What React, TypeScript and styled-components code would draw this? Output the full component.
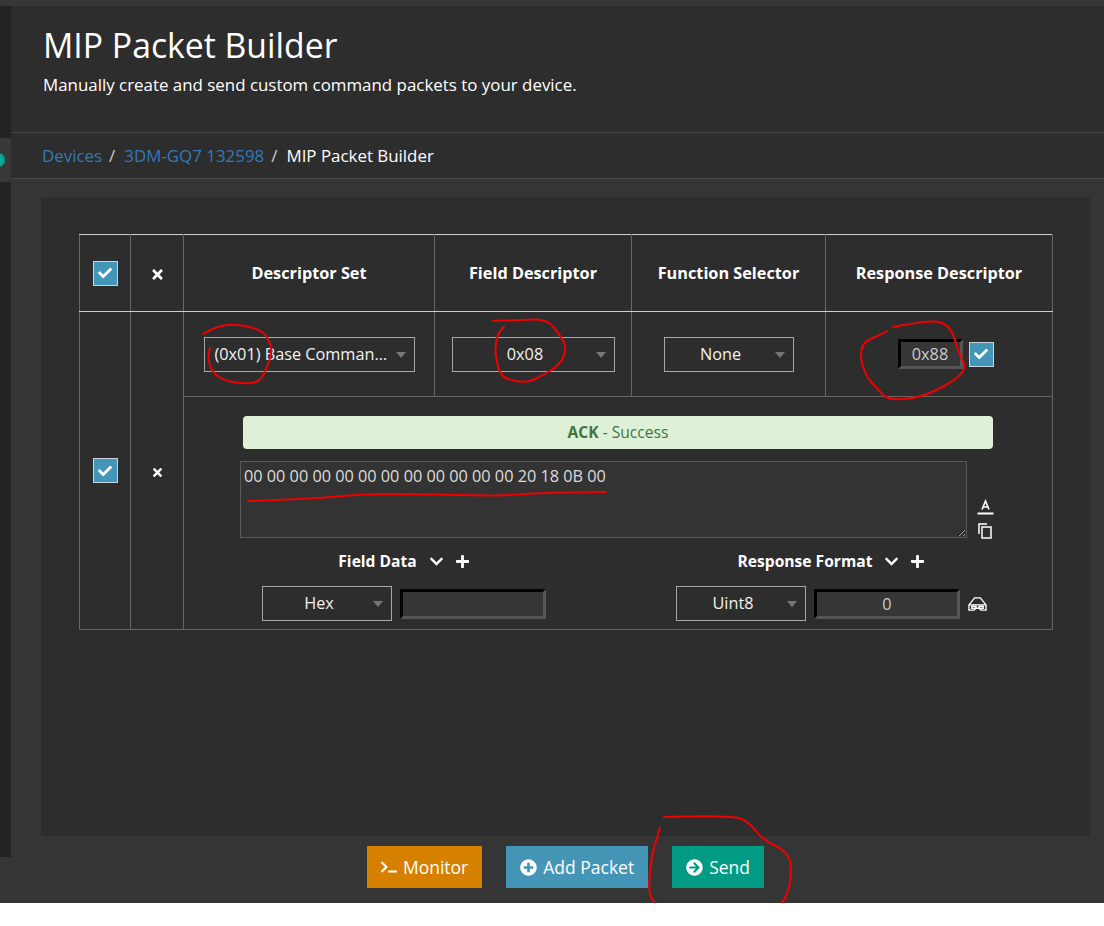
import styled, { createGlobalStyle } from 'styled-components';
import {
  FaArrowCircleRight,
  FaCheck,
  FaChevronDown,
  FaPlus,
  FaPlusCircle,
  FaTerminal,
  FaTimes,
} from 'react-icons/fa';

const GlobalStyle = createGlobalStyle`
  html, body {
    margin: 0;
    background: #ffffff;
  }
  * {
    box-sizing: border-box;
  }
`;

const Page = styled.div`
  position: relative;
  display: flex;
  flex-direction: column;
  height: 903px;
  background: #353535;
  color: #ffffff;
  font-family: 'Open Sans', sans-serif;
  font-size: 16.25px;
  overflow: visible;
`;

const TopStrip = styled.div`
  height: 6px;
  flex: none;
  background: #363636;
`;

const Body = styled.div`
  display: flex;
  flex: 1;
  min-height: 0;
`;

const Sidebar = styled.aside`
  width: 11px;
  flex: none;
  display: flex;
  flex-direction: column;
`;

const SideFill = styled.div<{ $height: number }>`
  height: ${(p) => p.$height}px;
  background: #232323;
`;

const SideActive = styled.div`
  height: 44px;
  display: flex;
  align-items: center;
  background: #383838;
  overflow: hidden;
`;

const StatusDot = styled.span`
  width: 14px;
  height: 14px;
  flex: none;
  margin-left: -9px;
  border-radius: 50%;
  background: #00a78e;
`;

const Main = styled.main`
  flex: 1;
  min-width: 0;
  display: flex;
  flex-direction: column;
`;

const PageHeader = styled.header`
  height: 127px;
  padding: 19px 32px 0;
  background: #2d2d2d;
  border-bottom: 1px solid #484848;
`;

const Title = styled.h1`
  margin: 0;
  font-size: 33.75px;
  font-weight: 400;
  line-height: 40px;
`;

const Subtitle = styled.p`
  margin: 9px 0 0;
  font-size: 16.9px;
  line-height: 22px;
`;

const Breadcrumb = styled.nav`
  height: 46px;
  display: flex;
  align-items: center;
  padding-left: 31px;
  background: #2d2d2d;
  border-bottom: 1px solid #484848;
  font-size: 16.9px;
`;

const Crumb = styled.a`
  color: #337ab7;
  text-decoration: none;
`;

const Slash = styled.span`
  margin: 0 9px 0 7px;
  color: #cccccc;
`;

const Panel = styled.section`
  height: 639px;
  flex: none;
  margin: 18px 14px 0 30px;
  padding: 37px 38px 0;
  background: #2d2d2d;
  border-radius: 2px;
`;

const PacketTable = styled.table`
  width: 973px;
  border-collapse: collapse;
  table-layout: fixed;
`;

const HeadCell = styled.th`
  height: 77px;
  padding: 0;
  border: 1px solid #666666;
  border-top-color: #cfcfcf;
  border-bottom-color: #cfcfcf;
  font-size: 16.25px;
  font-weight: 700;
  text-align: center;
`;

const Cell = styled.td<{ $height?: number }>`
  height: ${(p) => p.$height ?? 85}px;
  padding: 0;
  border: 1px solid #666666;
  text-align: center;
  vertical-align: middle;
`;

const Checkbox = styled.span<{ $small?: boolean }>`
  display: inline-flex;
  align-items: center;
  justify-content: center;
  width: 25px;
  height: 25px;
  flex: none;
  background: #4396b7;
  border: 1px solid #c8d6dc;
  color: #ffffff;
  font-size: 14px;
  vertical-align: middle;
`;

const RemoveIcon = styled(FaTimes)<{ $size: number }>`
  display: inline-block;
  vertical-align: middle;
  width: ${(p) => p.$size}px;
  height: ${(p) => p.$size}px;
  color: #ffffff;
`;

const Select = styled.div<{ $width: number }>`
  position: relative;
  width: ${(p) => p.$width}px;
  height: 35px;
  flex: none;
  padding: 0 26px 0 10px;
  border: 1px solid #a8a8a8;
  line-height: 33px;
  font-size: 16.25px;
  color: #f2f2f2;
  text-align: center;
  white-space: nowrap;
  overflow: hidden;
  text-overflow: ellipsis;

  &::after {
    content: '';
    position: absolute;
    right: 8px;
    top: 14px;
    border-left: 5px solid transparent;
    border-right: 5px solid transparent;
    border-top: 6px solid #777777;
  }
`;

const SelectRow = styled.div`
  display: flex;
  justify-content: center;
`;

const SunkenInput = styled.input<{ $width: number }>`
  width: ${(p) => p.$width}px;
  height: 30px;
  flex: none;
  padding: 0;
  background: #363636;
  border-style: solid;
  border-width: 3px;
  border-color: #000000 #555555 #555555 #000000;
  color: #cccccc;
  font-family: inherit;
  font-size: 16.25px;
  text-align: center;
  outline: none;
`;

const ResponseControl = styled.div`
  display: flex;
  align-items: center;
  justify-content: center;
  gap: 6px;
  padding-left: 13px;
`;

const DetailCell = styled(Cell)`
  padding: 19px 0 8px;
`;

const Alert = styled.div`
  width: 750px;
  height: 33px;
  margin-left: 59px;
  background: #dff0d8;
  border-radius: 4px;
  color: #3c763d;
  font-size: 15.6px;
  line-height: 33px;
  text-align: center;

  strong {
    font-weight: 700;
  }
`;

const PayloadRow = styled.div`
  display: flex;
  align-items: flex-end;
  gap: 9px;
  margin: 12px 0 0 56px;
`;

const Payload = styled.textarea`
  display: block;
  width: 727px;
  height: 77px;
  padding: 3px;
  background: #333333;
  border: 1px solid #5a5a5a;
  color: #dddddd;
  font-family: inherit;
  font-size: 16.25px;
  line-height: 22px;
  outline: none;
`;

const PayloadTools = styled.div`
  display: flex;
  flex-direction: column;
  align-items: center;
  gap: 8px;
  width: 18px;
  margin-bottom: -1px;
`;

const Formats = styled.div`
  display: flex;
  gap: 130px;
  margin: 10px 0 0 78px;
`;

const FormatGroup = styled.div<{ $width: number }>`
  width: ${(p) => p.$width}px;
`;

const FormatTitle = styled.div`
  display: flex;
  align-items: center;
  justify-content: center;
  height: 26px;
  font-size: 15.6px;
  font-weight: 700;
  color: #ffffff;
`;

const FormatActions = styled.span`
  display: inline-flex;
  align-items: center;
  gap: 11px;
  margin-left: 12px;
  font-size: 15px;
`;

const FormatControls = styled.div`
  display: flex;
  align-items: center;
  gap: 8px;
  margin-top: 12px;
`;

const Footer = styled.footer`
  display: flex;
  justify-content: center;
  gap: 24px;
  margin: 10px 14px 0 30px;
`;

const ActionButton = styled.button<{ $bg: string }>`
  display: inline-flex;
  align-items: center;
  gap: 6px;
  height: 42px;
  padding: 0 13px;
  background: ${(p) => p.$bg};
  border: 1px solid ${(p) => p.$bg};
  border-radius: 0;
  color: #ffffff;
  font-family: inherit;
  font-size: 17.5px;
`;

const Annotations = styled.svg`
  position: absolute;
  left: 0;
  top: 0;
  width: 1104px;
  height: 926px;
  pointer-events: none;
  fill: none;
  stroke: #f00000;
  stroke-width: 2;
  stroke-linecap: round;
  stroke-linejoin: round;
`;

type Point = [number, number];

// freehand red marks, smoothed through the midpoints
const smooth = (pts: Point[]) => {
  let d = `M${pts[0][0]} ${pts[0][1]}`;
  for (let i = 1; i < pts.length - 1; i++) {
    const mx = (pts[i][0] + pts[i + 1][0]) / 2;
    const my = (pts[i][1] + pts[i + 1][1]) / 2;
    d += ` Q${pts[i][0]} ${pts[i][1]} ${mx} ${my}`;
  }
  const last = pts[pts.length - 1];
  return `${d} L${last[0]} ${last[1]}`;
};

const marks: Point[][] = [
  [[203, 334], [217, 326], [237, 324], [262, 330], [270, 342], [272, 353], [267, 367], [260, 382], [243, 384], [223, 380], [212, 372], [208, 358], [210, 348]],
  [[493, 321], [520, 320], [547, 319], [560, 335], [567, 348], [560, 365], [543, 375], [528, 383], [503, 379], [497, 365], [495, 348], [498, 333], [504, 327]],
  [[893, 327], [920, 322], [942, 321], [953, 332], [958, 352], [967, 368], [953, 382], [920, 398], [887, 400], [877, 388], [867, 378], [860, 358], [863, 342], [880, 335], [887, 331]],
  [[248, 501], [313, 499], [360, 494], [420, 494], [497, 496], [537, 493], [606, 492]],
  [[664, 817], [733, 815], [750, 823], [763, 840], [788, 852], [792, 870], [787, 900], [763, 920], [733, 925], [687, 920], [657, 917], [655, 903], [648, 893], [652, 853], [660, 828]],
];

const FontColorIcon = () => (
  <svg width="17" height="16" viewBox="0 0 17 16" fill="none" stroke="#fff">
    <path d="M5 10.5 8.5 2l3.5 8.5M6.2 8h4.6" strokeWidth="1.6" />
    <path d="M0.5 14.5h16" strokeWidth="2" />
  </svg>
);

const CopyIcon = () => (
  <svg width="14" height="16" viewBox="0 0 14 16" fill="none" stroke="#fff" strokeWidth="1.5">
    <path d="M1 11V1h8" />
    <rect x="4" y="4" width="9" height="11" />
  </svg>
);

const GlassesIcon = () => (
  <svg width="20" height="16" viewBox="0 0 20 16" fill="none" stroke="#fff" strokeWidth="1.4">
    <path d="M1 9 7 1.5h6L19 9v5.5h-5.5l-1.5-2H8l-1.5 2H1z" />
    <path d="M1 9h18M4 10.5h4.5v2H4zM11.5 10.5H16v2h-4.500z" />
  </svg>
);

const App = () => (
  <Page>
    <GlobalStyle />
    <TopStrip />
    <Body>
      <Sidebar>
        <SideFill $height={132} />
        <SideActive>
          <StatusDot />
        </SideActive>
        <SideFill $height={675} />
      </Sidebar>
      <Main>
        <PageHeader>
          <Title>MIP Packet Builder</Title>
          <Subtitle>Manually create and send custom command packets to your device.</Subtitle>
        </PageHeader>
        <Breadcrumb>
          <Crumb>Devices</Crumb>
          <Slash>/</Slash>
          <Crumb>3DM-GQ7 132598</Crumb>
          <Slash>/</Slash>
          <span>MIP Packet Builder</span>
        </Breadcrumb>
        <Panel>
          <PacketTable>
            <colgroup>
              <col width="51" />
              <col width="53" />
              <col width="251" />
              <col width="197" />
              <col width="194" />
              <col width="227" />
            </colgroup>
            <thead>
              <tr>
                <HeadCell>
                  <Checkbox>
                    <FaCheck />
                  </Checkbox>
                </HeadCell>
                <HeadCell>
                  <RemoveIcon $size={15} />
                </HeadCell>
                <HeadCell>Descriptor Set</HeadCell>
                <HeadCell>Field Descriptor</HeadCell>
                <HeadCell>Function Selector</HeadCell>
                <HeadCell>Response Descriptor</HeadCell>
              </tr>
            </thead>
            <tbody>
              <tr>
                <Cell rowSpan={2}>
                  <Checkbox>
                    <FaCheck />
                  </Checkbox>
                </Cell>
                <Cell rowSpan={2}>
                  <RemoveIcon $size={13} />
                </Cell>
                <Cell>
                  <SelectRow>
                    <Select $width={211}>(0x01) Base Command Set</Select>
                  </SelectRow>
                </Cell>
                <Cell>
                  <SelectRow>
                    <Select $width={163}>0x08</Select>
                  </SelectRow>
                </Cell>
                <Cell>
                  <SelectRow>
                    <Select $width={130}>None</Select>
                  </SelectRow>
                </Cell>
                <Cell>
                  <ResponseControl>
                    <SunkenInput $width={65} defaultValue="0x88" />
                    <Checkbox>
                      <FaCheck />
                    </Checkbox>
                  </ResponseControl>
                </Cell>
              </tr>
              <tr>
                <DetailCell colSpan={4} $height={233}>
                  <Alert>
                    <strong>ACK</strong> - Success
                  </Alert>
                  <PayloadRow>
                    <Payload defaultValue="00 00 00 00 00 00 00 00 00 00 00 00 20 18 0B 00" />
                    <PayloadTools>
                      <FontColorIcon />
                      <CopyIcon />
                    </PayloadTools>
                  </PayloadRow>
                  <Formats>
                    <FormatGroup $width={284}>
                      <FormatTitle>
                        Field Data
                        <FormatActions>
                          <FaChevronDown />
                          <FaPlus />
                        </FormatActions>
                      </FormatTitle>
                      <FormatControls>
                        <Select $width={130}>Hex</Select>
                        <SunkenInput $width={146} />
                      </FormatControls>
                    </FormatGroup>
                    <FormatGroup $width={311}>
                      <FormatTitle>
                        Response Format
                        <FormatActions>
                          <FaChevronDown />
                          <FaPlus />
                        </FormatActions>
                      </FormatTitle>
                      <FormatControls>
                        <Select $width={130}>Uint8</Select>
                        <SunkenInput $width={146} defaultValue="0" />
                        <GlassesIcon />
                      </FormatControls>
                    </FormatGroup>
                  </Formats>
                </DetailCell>
              </tr>
            </tbody>
          </PacketTable>
        </Panel>
        <Footer>
          <ActionButton $bg="#d68000">
            <FaTerminal size={16} />
            Monitor
          </ActionButton>
          <ActionButton $bg="#4596b6">
            <FaPlusCircle size={17} />
            Add Packet
          </ActionButton>
          <ActionButton $bg="#009b82">
            <FaArrowCircleRight size={17} />
            Send
          </ActionButton>
        </Footer>
      </Main>
    </Body>
    <Annotations viewBox="0 0 1104 926">
      {marks.map((pts, i) => (
        <path key={i} d={smooth(pts)} />
      ))}
    </Annotations>
  </Page>
);

export default App;
